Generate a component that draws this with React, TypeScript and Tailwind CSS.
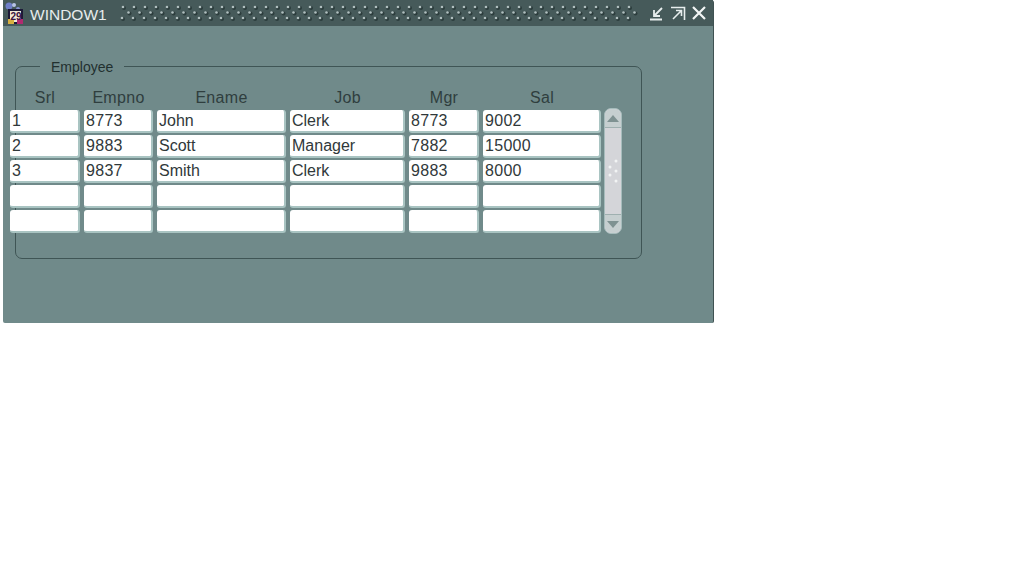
const cols = [
  { name: "Srl", w: "w-[70px]" },
  { name: "Empno", w: "w-[69px]" },
  { name: "Ename", w: "w-[129px]" },
  { name: "Job", w: "w-[115px]" },
  { name: "Mgr", w: "w-[70px]" },
  { name: "Sal", w: "w-[118px]" },
];

const rows = [
  ["1", "8773", "John", "Clerk", "8773", "9002"],
  ["2", "9883", "Scott", "Manager", "7882", "15000"],
  ["3", "9837", "Smith", "Clerk", "9883", "8000"],
  ["", "", "", "", "", ""],
  ["", "", "", "", "", ""],
];

function Dots() {
  const rowsY = [7, 12.5, 18];
  const offs = [3, 8.5, 2];
  const dots: JSX.Element[] = [];
  rowsY.forEach((y, r) => {
    for (let i = 0; i < 47; i++) {
      const x = offs[r] + i * 11;
      dots.push(<circle key={`a${r}-${i}`} cx={x + 1} cy={y + 1} r="2" fill="#2c3d3d" />);
      dots.push(<circle key={`b${r}-${i}`} cx={x} cy={y} r="1.3" fill="#b0bfbf" />);
    }
  });
  return (
    <svg width="518" height="26" className="block">
      {dots}
    </svg>
  );
}

function AppIcon() {
  return (
    <svg width="22" height="24" viewBox="0 0 22 24" className="block">
      <circle cx="6" cy="5" r="3.5" fill="#6f7fc8" />
      <circle cx="11" cy="4" r="2" fill="#b9c4e8" />
      <circle cx="15" cy="8" r="2" fill="#8794d4" />
      <rect x="5" y="8" width="15" height="15" fill="#1d1a38" />
      <rect x="7" y="10" width="11" height="11" fill="#f1ead8" />
      <rect x="5" y="18" width="6" height="5" fill="#d8b040" />
      <rect x="14" y="18" width="6" height="5" fill="#b02a70" />
      <text x="7.5" y="19" fontSize="10" fontWeight="700" fill="#3a1440" fontFamily="Liberation Sans">29</text>
    </svg>
  );
}

function Field({ value, w }: { value: string; w: string }) {
  const numeric = /^\d+$/.test(value);
  return (
    <div
      className={`${w} h-[23px] shrink-0 rounded-[3px] bg-white border-b-2 border-r-2 border-[#a9c4c2] pl-[2px] text-[16px] leading-[21px] text-[#30383a] ${
        numeric ? "tracking-[0.3px]" : ""
      }`}
    >
      {value}
    </div>
  );
}

function Scrollbar() {
  return (
    <div className="w-[18px] h-[126px] -mt-[2px] ml-[3px] rounded-[7px] bg-[#d4d5d9] border border-[#a6bcbc] flex flex-col justify-between">
      <div className="h-[19px] border-b border-[#9fb0b0] flex items-center justify-center bg-[#c6cfd0] rounded-t-[7px]">
        <svg width="12" height="7"><polygon points="6,0 12,7 0,7" fill="#7f9292" /></svg>
      </div>
      <div className="flex justify-center">
        <svg width="14" height="28">
          <circle cx="10" cy="4" r="1.5" fill="#f2f4f4" />
          <circle cx="4" cy="10" r="1.5" fill="#f2f4f4" />
          <circle cx="10" cy="14" r="1.5" fill="#f2f4f4" />
          <circle cx="4" cy="18" r="1.5" fill="#f2f4f4" />
          <circle cx="10" cy="24" r="1.5" fill="#f2f4f4" />
        </svg>
      </div>
      <div className="h-[19px] border-t border-[#9fb0b0] flex items-center justify-center bg-[#c6cfd0] rounded-b-[7px]">
        <svg width="12" height="7"><polygon points="0,0 12,0 6,7" fill="#7f9292" /></svg>
      </div>
    </div>
  );
}

export default function App() {
  return (
    <div className="w-[1024px] h-[576px] bg-white overflow-hidden font-['Liberation_Sans',Arial,sans-serif]">
      <div className="ml-[3px] w-[711px] h-[323px] bg-[#708a8a] rounded-b-[2px] rounded-tr-[3px] border-r border-[#3f5252] flex flex-col">
        <div className="h-[26px] shrink-0 bg-[#465a5a] flex items-center">
          <div className="w-[27px] shrink-0"><AppIcon /></div>
          <span className="w-[90px] shrink-0 pt-[3px] text-[15.5px] leading-none text-[#e6ecec]">WINDOW1</span>
          <Dots />
          <div className="ml-[11px] flex items-center gap-[5px]">
            <svg width="16" height="16" viewBox="0 0 16 16">
              <path d="M1 14.5h12M13 3L5 11M5 5v6h6" stroke="#e8eeee" strokeWidth="1.8" fill="none" />
            </svg>
            <svg width="16" height="16" viewBox="0 0 16 16">
              <path d="M1 2.500h13.500V15M3 14l8-8M6 5.500h5.500V11" stroke="#e8eeee" strokeWidth="1.6" fill="none" />
            </svg>
            <svg width="16" height="16" viewBox="0 0 16 16">
              <path d="M2 2l12 12M14 2L2 14" stroke="#f2f5f5" strokeWidth="2.2" fill="none" />
            </svg>
          </div>
        </div>
        <div className="relative mt-[40px] ml-[12px] w-[627px] h-[193px] border border-[#3f5555] rounded-[7px] shrink-0">
          <div className="absolute left-[24px] -top-[8px] px-[11px] bg-[#708a8a] text-[14px] leading-[17px] text-[#22302f]">
            Employee
          </div>
          <div className="-ml-[6px] mt-[21px] flex gap-[4px] text-[16px] leading-[20px] tracking-[0.3px] text-[#2f3e3e]">
            {cols.map((c) => (
              <div key={c.name} className={`${c.w} shrink-0 text-center`}>{c.name}</div>
            ))}
          </div>
          <div className="-ml-[6px] mt-[2px] flex">
            <div className="flex flex-col gap-[2px]">
              {rows.map((r, i) => (
                <div key={i} className="flex gap-[4px]">
                  {r.map((v, j) => (
                    <Field key={j} value={v} w={cols[j].w} />
                  ))}
                </div>
              ))}
            </div>
            <Scrollbar />
          </div>
        </div>
      </div>
    </div>
  );
}
